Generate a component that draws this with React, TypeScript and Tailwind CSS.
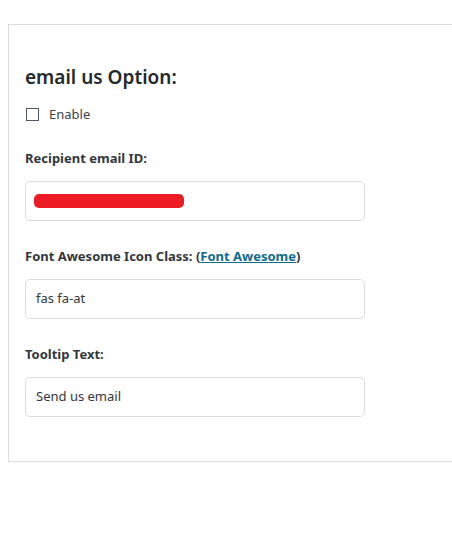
import React from 'react';

const font = { fontFamily: '"Noto Sans", "Open Sans", sans-serif' };

function Field({ label, children }: { label: React.ReactNode; children: React.ReactNode }) {
    return (
        <div className="flex flex-col">
            <label className="text-[13px] font-bold text-[#32373c] leading-[18px] mb-[14px]">{label}</label>
            {children}
        </div>
    );
}

function TextBox({ children }: { children?: React.ReactNode }) {
    return (
        <div className="w-[340px] h-[40px] border border-[#dcdcde] rounded-[5px] bg-white flex items-center px-[10px] text-[13px] text-[#32373c]">
            {children}
        </div>
    );
}

export default function App() {
    return (
        <div className="min-h-[554px] bg-white pt-[24px] pl-[8px]" style={font}>
            <div className="border-l border-t border-b border-[#dcdcde] bg-white w-[444px] h-[438px] px-[16px] pt-[39px]">
                <h2 className="text-[19px] font-semibold text-[#23282d] leading-[26px]">email us Option:</h2>

                <div className="flex items-center gap-[10px] mt-[15px] ml-[1px]">
                    <span className="w-[13px] h-[13px] border border-[#50575e] bg-white" />
                    <span className="text-[13px] text-[#3c434a]">Enable</span>
                </div>

                <div className="flex flex-col gap-[26px] mt-[24px]">
                    <Field label="Recipient email ID:">
                        <TextBox>
                            <span className="-ml-[2px] block w-[150px] h-[14px] bg-[#ed1c24] rounded-[5px]" />
                        </TextBox>
                    </Field>

                    <Field
                        label={
                            <>
                                Font Awesome Icon Class: (
                                <a href="#" className="text-[#0e6b8c] underline">Font Awesome</a>
                                )
                            </>
                        }
                    >
                        <TextBox>fas fa-at</TextBox>
                    </Field>

                    <Field label="Tooltip Text:">
                        <TextBox>Send us email</TextBox>
                    </Field>
                </div>
            </div>
        </div>
    );
}
